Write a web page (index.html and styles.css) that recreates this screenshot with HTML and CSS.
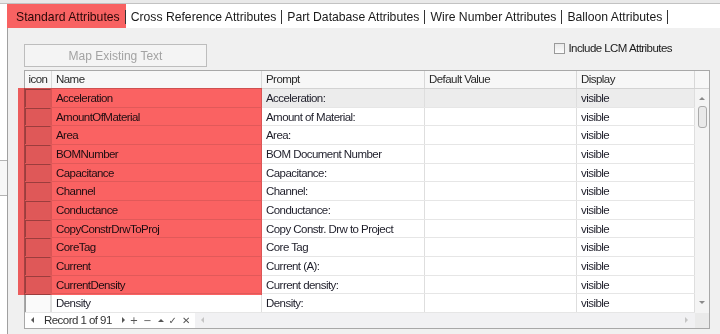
FILE: index.html
```html
<!DOCTYPE html>
<html>
<head>
  <link rel="stylesheet" href="styles.css">
</head>
<body>
  <div class="topbar"></div>
  <div class="window">
    <div class="side">
      <div class="side-box"></div>
    </div>
    <div class="main">
      <div class="tabs">
        <div class="tab active">Standard Attributes</div>
        <div class="tab">Cross Reference Attributes</div>
        <div class="tab">Part Database Attributes</div>
        <div class="tab">Wire Number Attributes</div>
        <div class="tab">Balloon Attributes</div>
      </div>

      <div class="panel">
        <div class="toolbar">
          <button class="map-button" disabled>Map Existing Text</button>
          <label class="lcm">
            <span class="checkbox"></span>
            Include LCM Attributes
          </label>
        </div>

        <div class="grid">
          <div class="grid-head">
            <div class="hcell center">icon</div>
            <div class="hcell">Name</div>
            <div class="hcell">Prompt</div>
            <div class="hcell">Default Value</div>
            <div class="hcell">Display</div>
            <div class="hcell last"></div>
          </div>

          <div class="grid-body">
            <div class="rows">
              <div class="row focused">
                <div class="cell icon"><div class="icon-box"></div></div>
                <div class="cell">Acceleration</div>
                <div class="cell">Acceleration:</div>
                <div class="cell"></div>
                <div class="cell">visible</div>
              </div>
              <div class="row">
                <div class="cell icon"><div class="icon-box"></div></div>
                <div class="cell">AmountOfMaterial</div>
                <div class="cell">Amount of Material:</div>
                <div class="cell"></div>
                <div class="cell">visible</div>
              </div>
              <div class="row">
                <div class="cell icon"><div class="icon-box"></div></div>
                <div class="cell">Area</div>
                <div class="cell">Area:</div>
                <div class="cell"></div>
                <div class="cell">visible</div>
              </div>
              <div class="row">
                <div class="cell icon"><div class="icon-box"></div></div>
                <div class="cell">BOMNumber</div>
                <div class="cell">BOM Document Number</div>
                <div class="cell"></div>
                <div class="cell">visible</div>
              </div>
              <div class="row">
                <div class="cell icon"><div class="icon-box"></div></div>
                <div class="cell">Capacitance</div>
                <div class="cell">Capacitance:</div>
                <div class="cell"></div>
                <div class="cell">visible</div>
              </div>
              <div class="row">
                <div class="cell icon"><div class="icon-box"></div></div>
                <div class="cell">Channel</div>
                <div class="cell">Channel:</div>
                <div class="cell"></div>
                <div class="cell">visible</div>
              </div>
              <div class="row">
                <div class="cell icon"><div class="icon-box"></div></div>
                <div class="cell">Conductance</div>
                <div class="cell">Conductance:</div>
                <div class="cell"></div>
                <div class="cell">visible</div>
              </div>
              <div class="row">
                <div class="cell icon"><div class="icon-box"></div></div>
                <div class="cell">CopyConstrDrwToProj</div>
                <div class="cell">Copy Constr. Drw to Project</div>
                <div class="cell"></div>
                <div class="cell">visible</div>
              </div>
              <div class="row">
                <div class="cell icon"><div class="icon-box"></div></div>
                <div class="cell">CoreTag</div>
                <div class="cell">Core Tag</div>
                <div class="cell"></div>
                <div class="cell">visible</div>
              </div>
              <div class="row">
                <div class="cell icon"><div class="icon-box"></div></div>
                <div class="cell">Current</div>
                <div class="cell">Current (A):</div>
                <div class="cell"></div>
                <div class="cell">visible</div>
              </div>
              <div class="row">
                <div class="cell icon"><div class="icon-box"></div></div>
                <div class="cell">CurrentDensity</div>
                <div class="cell">Current density:</div>
                <div class="cell"></div>
                <div class="cell">visible</div>
              </div>
              <div class="row">
                <div class="cell icon"><div class="icon-box plain"></div></div>
                <div class="cell">Density</div>
                <div class="cell">Density:</div>
                <div class="cell"></div>
                <div class="cell">visible</div>
              </div>
            </div>
            <div class="vscroll">
              <span class="arrow up"></span>
              <span class="thumb"></span>
              <span class="arrow down"></span>
            </div>
          </div>

          <div class="nav">
            <div class="nav-left">
              <span class="tri left"></span>
              <span class="record">Record 1 of 91</span>
              <span class="tri right"></span>
              <span class="nav-btn">+</span>
              <span class="nav-btn">&minus;</span>
              <span class="tri up"></span>
              <span class="nav-btn">&#10003;</span>
              <span class="nav-btn">&#10005;</span>
            </div>
            <div class="hscroll">
              <span class="tri left faint"></span>
              <span class="tri right faint"></span>
            </div>
            <div class="corner"></div>
          </div>

          <!-- marker highlight drawn over the screenshot -->
          <div class="highlight"></div>
        </div>
      </div>
    </div>
  </div>
</body>
</html>
```

FILE: styles.css
```css
body {
  margin: 0;
  width: 720px;
  height: 334px;
  overflow: hidden;
  background: #f0f0f0;
  font-family: "Liberation Sans", Arial, sans-serif;
  color: #222;
}
.topbar {
  height: 3px;
  background: #e9e9e9;
  border-bottom: 1px solid #c2c2c2;
}
.window {
  display: flex;
  height: 330px;
}
.side {
  width: 7px;
  flex: none;
  background: #fff;
  padding-top: 156px;
}
.side-box {
  height: 34px;
  border-top: 1px solid #b4b4b4;
  border-bottom: 1px solid #b4b4b4;
  background: #f7f7f7;
}
.main {
  flex: 1;
  display: flex;
  flex-direction: column;
}
.tabs {
  height: 24px;
  display: flex;
  background: #fff;
  font-size: 12.2px;
}
.tab {
  display: flex;
  align-items: center;
  padding-left: 5px;
  padding-top: 1px;
  color: #1a1a1a;
}
.tab::after {
  content: "";
  width: 1px;
  height: 14px;
  margin-left: 5px;
  background: #333;
}
.tab.active {
  padding-left: 9px;
  background: #f86262;
  color: #2a0808;
}
.panel {
  flex: 1;
  border-left: 1px solid #a0a0a0;
  padding: 16px 10px 0 16px;
}
.toolbar {
  display: flex;
  align-items: flex-start;
  height: 23px;
}
.map-button {
  width: 183px;
  height: 23px;
  box-sizing: border-box;
  border: 1px solid #bdbdbd;
  background: #f4f4f4;
  color: #a3a3a3;
  font-family: "Liberation Sans", Arial, sans-serif;
  font-size: 12px;
  padding: 0;
}
.lcm {
  margin-left: auto;
  margin-right: 38px;
  margin-top: -2px;
  display: flex;
  align-items: center;
  gap: 3px;
  font-size: 11.5px;
  letter-spacing: -0.55px;
  color: #1a1a1a;
}
.checkbox {
  width: 9px;
  height: 9px;
  border: 1px solid #9a9a9a;
  background: linear-gradient(#e9e9e9, #fcfcfc);
}
.grid {
  position: relative;
  margin-top: 3px;
  border: 1px solid #a8a8a8;
  background: #fff;
}
.grid-head {
  display: grid;
  grid-template-columns: 27px 210px 163px 152px 118px 14px;
  height: 18px;
  box-sizing: border-box;
  border-bottom: 1px solid #d3d3d3;
  background: #f7f7f7;
}
.hcell {
  border-right: 1px solid #d8d8d8;
  padding-left: 4px;
  font-size: 11.5px;
  letter-spacing: -0.55px;
  line-height: 17px;
  color: #2a2a2a;
}
.hcell.center {
  padding-left: 0;
  text-align: center;
}
.hcell.last {
  border-right: none;
}
.grid-body {
  display: flex;
}
.rows {
  flex: 1;
}
.row {
  display: grid;
  grid-template-columns: 27px 210px 163px 152px 118px;
  height: 18.67px;
  box-sizing: border-box;
  border-bottom: 1px solid #e6e6e6;
}
.row.focused .cell:nth-child(n+3) {
  background: #ececec;
}
.cell {
  border-right: 1px solid #dedede;
  padding-left: 4px;
  font-size: 11.5px;
  letter-spacing: -0.55px;
  line-height: 18px;
  white-space: nowrap;
  overflow: hidden;
  color: #1e1e2a;
}
.cell.icon {
  padding: 0;
}
.icon-box {
  height: 100%;
  box-sizing: border-box;
  border-top: 1px solid #9e9e9e;
  border-left: 1px solid #9e9e9e;
  border-right: 1px solid #e0e0e0;
  background: #e4e4e4;
}
.icon-box.plain {
  background: #fafafa;
}
.vscroll {
  width: 14px;
  background: #f4f4f4;
  display: flex;
  flex-direction: column;
  align-items: center;
}
.arrow {
  width: 0;
  height: 0;
  border-left: 3px solid transparent;
  border-right: 3px solid transparent;
}
.arrow.up {
  margin-top: 8px;
  border-bottom: 3px solid #8a8a8a;
}
.arrow.down {
  margin-top: auto;
  margin-bottom: 9px;
  border-top: 3px solid #8a8a8a;
}
.thumb {
  width: 7px;
  height: 20px;
  margin-top: 6px;
  border: 1px solid #ababab;
  border-radius: 3px;
  background: #e9e9e9;
}
.nav {
  display: flex;
  height: 15px;
}
.nav-left {
  width: 170px;
  display: flex;
  align-items: center;
  background: #fff;
  font-size: 11.5px;
  letter-spacing: -0.55px;
  color: #333;
}
.record {
  margin: 0 10px 0 10px;
}
.nav-btn {
  margin-left: 5px;
  font-family: "DejaVu Sans", sans-serif;
  font-size: 10px;
  letter-spacing: 0;
  color: #555;
}
.tri {
  width: 0;
  height: 0;
}
.tri.left {
  margin-left: 6px;
  border-top: 3px solid transparent;
  border-bottom: 3px solid transparent;
  border-right: 3px solid #555;
}
.tri.right {
  border-top: 3px solid transparent;
  border-bottom: 3px solid transparent;
  border-left: 3px solid #555;
}
.tri.up {
  margin-left: 6px;
  border-left: 3px solid transparent;
  border-right: 3px solid transparent;
  border-bottom: 3px solid #555;
}
.tri.faint.left {
  border-right-color: #c4c4c4;
}
.tri.faint.right {
  margin-left: auto;
  margin-right: 7px;
  border-left-color: #c4c4c4;
}
.hscroll {
  flex: 1;
  display: flex;
  align-items: center;
  background: #f1f1f3;
}
.corner {
  width: 14px;
  background: #eaeaea;
}
.highlight {
  position: absolute;
  left: -7px;
  top: 17px;
  width: 244px;
  height: 207px;
  background: #fa6262;
  mix-blend-mode: multiply;
}
```
